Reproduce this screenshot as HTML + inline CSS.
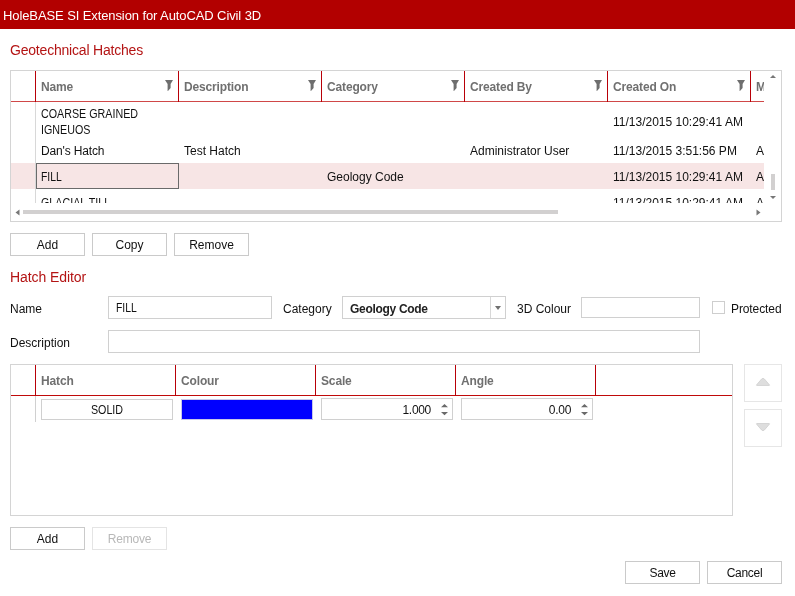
<!DOCTYPE html>
<html>
<head>
<meta charset="utf-8">
<title>HoleBASE SI Extension for AutoCAD Civil 3D</title>
<style>
html,body{margin:0;padding:0;}
body{width:795px;height:596px;background:#fff;position:relative;overflow:hidden;font-family:"Liberation Sans",sans-serif;font-size:12px;color:#111;}
*{box-sizing:border-box;}
#root{position:absolute;left:0;top:0;width:795px;height:596px;will-change:transform;}
.abs{position:absolute;}
.t{position:absolute;white-space:nowrap;line-height:16px;height:16px;}
.cap{transform:scaleX(0.893);transform-origin:0 0;}
#titlebar{left:0;top:0;width:795px;height:29px;background:#b20000;}
#titlebar .t{color:#fff;font-size:13px;left:3px;top:8px;letter-spacing:-0.1px;}
.sec{color:#b41414;font-size:14px;letter-spacing:-0.2px;}
.grid{border:1px solid #d4d4d4;background:#fff;overflow:hidden;}
.hdr{font-weight:bold;color:#707070;letter-spacing:-0.15px;}
.vl{position:absolute;width:1px;background:#b80008;}
.hl{position:absolute;height:1px;background:#d04848;}
.btn{position:absolute;height:23px;width:75px;border:1px solid #cacaca;background:#fff;text-align:center;padding-top:1px;line-height:20px;font-size:12px;color:#111;}
.btn.dis{color:#b8b8b8;border-color:#e4e4e4;letter-spacing:-0.2px;}
.inp{position:absolute;border:1px solid #d0d0d0;background:#fff;}
.flt{position:absolute;width:8px;height:11px;}
</style>
</head>
<body>
<div id="root">
<div id="titlebar" class="abs"><span class="t">HoleBASE SI Extension for AutoCAD Civil 3D</span></div>

<span class="t sec" style="left:10px;top:42px;">Geotechnical Hatches</span>

<!-- top grid -->
<div class="abs grid" id="g1" style="left:10px;top:70px;width:772px;height:152px;">
  <!-- coordinates inside are relative to (11,71) -->
  <div class="abs" id="g1view" style="left:0;top:0;width:753px;height:132px;overflow:hidden;">
    <!-- selected row -->
    <div class="abs" style="left:0;top:92px;width:754px;height:26px;background:#f7e5e5;"></div>
    <div class="abs" style="left:25px;top:92px;width:143px;height:26px;border:1px solid #6a6a6a;"></div>
    <!-- row header column line -->
    <div class="abs" style="left:24px;top:31px;width:1px;height:101px;background:#d8d8d8;"></div>
    <!-- header -->
    <div class="hl" style="left:0;top:30px;width:754px;"></div>
    <div class="vl" style="left:24px;top:0;height:31px;"></div>
    <div class="vl" style="left:167px;top:0;height:31px;"></div>
    <div class="vl" style="left:310px;top:0;height:31px;"></div>
    <div class="vl" style="left:453px;top:0;height:31px;"></div>
    <div class="vl" style="left:596px;top:0;height:31px;"></div>
    <div class="vl" style="left:739px;top:0;height:31px;"></div>
    <span class="t hdr" style="left:30px;top:8px;">Name</span>
    <span class="t hdr" style="left:173px;top:8px;">Description</span>
    <span class="t hdr" style="left:316px;top:8px;">Category</span>
    <span class="t hdr" style="left:459px;top:8px;">Created By</span>
    <span class="t hdr" style="left:602px;top:8px;">Created On</span>
    <span class="t hdr" style="left:745px;top:8px;">Modified By</span>
    <svg class="flt" style="left:154px;top:9px;" viewBox="0 0 8 11"><path d="M0 0H8L5.6 4V8L3 11H2.6V4Z" fill="#6e6e6e"/></svg>
    <svg class="flt" style="left:297px;top:9px;" viewBox="0 0 8 11"><path d="M0 0H8L5.6 4V8L3 11H2.6V4Z" fill="#6e6e6e"/></svg>
    <svg class="flt" style="left:440px;top:9px;" viewBox="0 0 8 11"><path d="M0 0H8L5.6 4V8L3 11H2.6V4Z" fill="#6e6e6e"/></svg>
    <svg class="flt" style="left:583px;top:9px;" viewBox="0 0 8 11"><path d="M0 0H8L5.6 4V8L3 11H2.6V4Z" fill="#6e6e6e"/></svg>
    <svg class="flt" style="left:726px;top:9px;" viewBox="0 0 8 11"><path d="M0 0H8L5.6 4V8L3 11H2.6V4Z" fill="#6e6e6e"/></svg>
    <!-- rows -->
    <span class="t cap" style="left:30px;top:35px;">COARSE GRAINED</span>
    <span class="t cap" style="left:30px;top:51px;">IGNEUOS</span>
    <span class="t" style="left:602px;top:43px;">11/13/2015 10:29:41 AM</span>

    <span class="t" style="left:30px;top:72px;letter-spacing:-0.15px;">Dan's Hatch</span>
    <span class="t" style="left:173px;top:72px;">Test Hatch</span>
    <span class="t" style="left:459px;top:72px;">Administrator User</span>
    <span class="t" style="left:602px;top:72px;">11/13/2015 3:51:56 PM</span>
    <span class="t" style="left:745px;top:72px;">Administrator User</span>

    <span class="t cap" style="left:30px;top:98px;transform:scaleX(0.865);">FILL</span>
    <span class="t" style="left:316px;top:98px;">Geology Code</span>
    <span class="t" style="left:602px;top:98px;">11/13/2015 10:29:41 AM</span>
    <span class="t" style="left:745px;top:98px;">Administrator User</span>

    <span class="t cap" style="left:30px;top:124px;">GLACIAL TILL</span>
    <span class="t" style="left:602px;top:124px;">11/13/2015 10:29:41 AM</span>
    <span class="t" style="left:745px;top:124px;">Administrator User</span>
  </div>
  <!-- horizontal scrollbar -->
  <div class="abs" style="left:12px;top:139px;width:535px;height:4px;background:#d2d0d0;"></div>
  <svg class="abs" style="left:4px;top:138px;" width="5" height="7" viewBox="0 0 5 7"><path d="M4.5 0.5V6.5L0.5 3.5Z" fill="#777"/></svg>
  <svg class="abs" style="left:745px;top:138px;" width="5" height="7" viewBox="0 0 5 7"><path d="M0.5 0.5V6.5L4.5 3.5Z" fill="#777"/></svg>
  <!-- vertical scrollbar -->
  <svg class="abs" style="left:759px;top:4px;" width="6" height="3" viewBox="0 0 6 3"><path d="M0 3H6L3 0Z" fill="#777"/></svg>
  <div class="abs" style="left:760px;top:103px;width:4px;height:16px;background:#d2d0d0;"></div>
  <svg class="abs" style="left:759px;top:125px;" width="6" height="3" viewBox="0 0 6 3"><path d="M0 0H6L3 3Z" fill="#777"/></svg>
</div>

<div class="btn" style="left:10px;top:233px;">Add</div>
<div class="btn" style="left:92px;top:233px;">Copy</div>
<div class="btn" style="left:174px;top:233px;">Remove</div>

<span class="t sec" style="left:10px;top:269px;letter-spacing:-0.08px;">Hatch Editor</span>

<span class="t" style="left:10px;top:301px;">Name</span>
<div class="inp" style="left:108px;top:296px;width:164px;height:23px;"></div>
<span class="t cap" style="left:116px;top:300px;transform:scaleX(0.865);">FILL</span>
<span class="t" style="left:283px;top:301px;">Category</span>
<div class="inp" style="left:342px;top:296px;width:164px;height:23px;"></div>
<div class="abs" style="left:490px;top:297px;width:1px;height:21px;background:#d8d8d8;"></div>
<svg class="abs" style="left:495px;top:306px;" width="6" height="4" viewBox="0 0 6 4"><path d="M0 0H6L3 4Z" fill="#707070"/></svg>
<span class="t" style="left:350px;top:301px;font-weight:bold;color:#222;letter-spacing:-0.3px;">Geology Code</span>
<span class="t" style="left:517px;top:301px;">3D Colour</span>
<div class="inp" style="left:581px;top:297px;width:119px;height:21px;"></div>
<div class="inp" style="left:712px;top:301px;width:13px;height:13px;border-color:#cecece;"></div>
<span class="t" style="left:731px;top:301px;letter-spacing:-0.1px;">Protected</span>

<span class="t" style="left:10px;top:335px;">Description</span>
<div class="inp" style="left:108px;top:330px;width:592px;height:23px;"></div>

<!-- hatch grid -->
<div class="abs grid" id="g2" style="left:10px;top:364px;width:723px;height:152px;">
  <div class="hl" style="left:0;top:30px;width:721px;background:#c00a0a;"></div>
  <div class="vl" style="left:24px;top:0;height:31px;"></div>
  <div class="vl" style="left:164px;top:0;height:31px;"></div>
  <div class="vl" style="left:304px;top:0;height:31px;"></div>
  <div class="vl" style="left:444px;top:0;height:31px;"></div>
  <div class="vl" style="left:584px;top:0;height:31px;"></div>
  <div class="abs" style="left:24px;top:31px;width:1px;height:26px;background:#d0d0d0;"></div>
  <span class="t hdr" style="left:30px;top:8px;">Hatch</span>
  <span class="t hdr" style="left:170px;top:8px;">Colour</span>
  <span class="t hdr" style="left:310px;top:8px;">Scale</span>
  <span class="t hdr" style="left:450px;top:8px;">Angle</span>
  <div class="inp" style="left:30px;top:34px;width:132px;height:21px;"></div>
  <span class="t cap" style="left:30px;top:37px;width:132px;text-align:center;transform-origin:50% 0;">SOLID</span>
  <div class="abs" style="left:170px;top:34px;width:132px;height:21px;background:#0000ff;border:1px solid #c8c8ea;"></div>
  <div class="inp" style="left:310px;top:33px;width:132px;height:22px;"></div>
  <span class="t" style="left:310px;top:37px;width:110px;text-align:right;letter-spacing:-0.3px;">1.000</span>
  <svg class="abs" style="left:430px;top:39px;" width="7" height="12" viewBox="0 0 7 12"><path d="M0 3.2H7L3.5 0Z M0 8H7L3.5 11.2Z" fill="#6a6a6a"/></svg>
  <div class="inp" style="left:450px;top:33px;width:132px;height:22px;"></div>
  <span class="t" style="left:450px;top:37px;width:110px;text-align:right;letter-spacing:-0.3px;">0.00</span>
  <svg class="abs" style="left:570px;top:39px;" width="7" height="12" viewBox="0 0 7 12"><path d="M0 3.2H7L3.5 0Z M0 8H7L3.5 11.2Z" fill="#6a6a6a"/></svg>
</div>

<!-- up/down buttons -->
<div class="inp" style="left:744px;top:364px;width:38px;height:38px;border-color:#e6e6e6;"></div>
<svg class="abs" style="left:755px;top:377px;" width="16" height="10" viewBox="0 0 16 10"><path d="M2 8.5Q1 8.5 1.8 7.6L6.6 2Q8 0.6 9.4 2L14.2 7.6Q15 8.5 14 8.5Z" fill="#dedede" stroke="#cfcfcf" stroke-width="0.8"/></svg>
<div class="inp" style="left:744px;top:409px;width:38px;height:38px;border-color:#e6e6e6;"></div>
<svg class="abs" style="left:755px;top:422px;" width="16" height="10" viewBox="0 0 16 10"><path d="M2 1.5Q1 1.5 1.8 2.4L6.6 8Q8 9.4 9.4 8L14.2 2.4Q15 1.5 14 1.5Z" fill="#dedede" stroke="#cfcfcf" stroke-width="0.8"/></svg>

<div class="btn" style="left:10px;top:527px;">Add</div>
<div class="btn dis" style="left:92px;top:527px;">Remove</div>

<div class="btn" style="left:625px;top:561px;letter-spacing:-0.3px;">Save</div>
<div class="btn" style="left:707px;top:561px;letter-spacing:-0.3px;">Cancel</div>
</div>
</body>
</html>
